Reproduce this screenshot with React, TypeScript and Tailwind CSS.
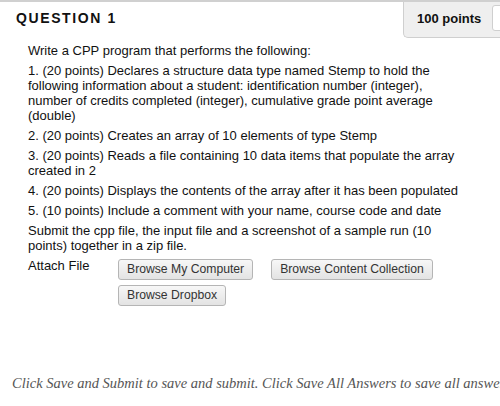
import React from "react";

const btn =
  "h-[21px] px-[8px] rounded-[3px] border border-[#b5b5b5] bg-gradient-to-b from-[#f7f7f7] to-[#e3e3e3] text-[12.2px] text-[#333] leading-none whitespace-nowrap";

export default function App() {
  return (
    <div className="w-[500px] h-[406px] bg-white overflow-hidden relative border-t-[2px] border-[#d0d0d0]" style={{ fontFamily: '"Liberation Sans", Arial, sans-serif' }}>
      <div className="flex items-start h-[36px]">
        <div className="pl-[16px] pt-[6px] text-[14px] font-bold tracking-[1.6px] text-[#111]">QUESTION 1</div>
        <div className="ml-auto w-[97px] h-[36px] bg-[#efefef] border-l border-b border-[#cfcfcf] rounded-bl-[5px] flex items-start relative">
          <span className="pl-[13px] pt-[7px] text-[13px] font-bold text-[#111]">100 points</span>
          <div className="absolute left-[88px] top-[3px] w-[20px] h-[26px] bg-white border border-[#cfcfcf] rounded-[3px]" />
        </div>
      </div>
      <div className="pl-[28px] pt-[5px] text-[13px] leading-[15px] text-[#111] flex flex-col gap-[5px]">
        <p>Write a CPP program that performs the following:</p>
        <p>1. (20 points) Declares a structure data type named Stemp to hold the<br />following information about a student: identification number (integer),<br />number of credits completed (integer), cumulative grade point average<br />(double)</p>
        <p>2. (20 points) Creates an array of 10 elements of type Stemp</p>
        <p>3. (20 points) Reads a file containing 10 data items that populate the array<br />created in 2</p>
        <p>4. (20 points) Displays the contents of the array after it has been populated</p>
        <p>5. (10 points) Include a comment with your name, course code and date</p>
        <p>Submit the cpp file, the input file and a screenshot of a sample run (10<br />points) together in a zip file.</p>
        <div className="flex items-start">
          <span className="w-[90px]">Attach File</span>
          <div className="flex flex-col gap-[5px] pt-[1px]">
            <div className="flex gap-[18px]">
              <button className={btn}>Browse My Computer</button>
              <button className={btn}>Browse Content Collection</button>
            </div>
            <div className="flex">
              <button className={btn}>Browse Dropbox</button>
            </div>
          </div>
        </div>
      </div>
      <div className="absolute left-[12px] top-[371px] whitespace-nowrap italic text-[14.5px] text-[#555]" style={{ fontFamily: '"Liberation Serif", Georgia, serif' }}>
        Click Save and Submit to save and submit. Click Save All Answers to save all answers.
      </div>
    </div>
  );
}
